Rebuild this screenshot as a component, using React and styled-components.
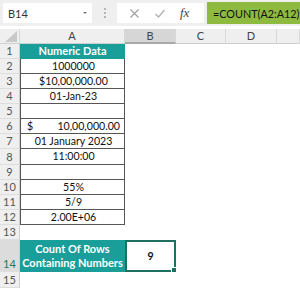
import React from "react";
import styled, { createGlobalStyle } from "styled-components";

const GlobalStyle = createGlobalStyle`
  html, body {
    margin: 0;
    padding: 0;
    background: #ffffff;
  }
  body {
    font-family: Lato, "Open Sans", "Liberation Sans", sans-serif;
    width: 300px;
    height: 288px;
    overflow: hidden;
  }
`;

const Page = styled.div`
  width: 300px;
  height: 288px;
  display: flex;
  flex-direction: column;
  overflow: hidden;
`;

const FormulaBar = styled.div`
  height: 27px;
  background: #efefef;
  display: flex;
  align-items: flex-start;
  padding-top: 3px;
  box-sizing: border-box;
`;

const NameBox = styled.div`
  margin-left: 3px;
  width: 89px;
  height: 20px;
  background: #ffffff;
  display: flex;
  align-items: center;
  justify-content: space-between;
  padding: 0 5px 0 5px;
  box-sizing: border-box;
  font-size: 11px;
  color: #333;
`;

const Caret = styled.span`
  width: 0;
  height: 0;
  border-left: 2px solid transparent;
  border-right: 2px solid transparent;
  border-top: 2px solid #777;
`;

const Dots = styled.div`
  width: 25px;
  height: 20px;
  display: flex;
  flex-direction: column;
  align-items: center;
  justify-content: center;
  gap: 2px;
  span {
    width: 2px;
    height: 2px;
    background: #b5b5b5;
  }
`;

const IconBox = styled.div`
  width: 87px;
  height: 20px;
  background: #ffffff;
  display: flex;
  align-items: center;
  padding-left: 12px;
  box-sizing: border-box;
  gap: 10px;
`;

const Fx = styled.span`
  font-family: "Liberation Serif", serif;
  font-style: italic;
  font-size: 13px;
  color: #444;
  margin-left: 4px;
`;

const Formula = styled.div`
  margin-left: 3px;
  flex: 1;
  height: 22px;
  margin-top: -1px;
  background: #8dba3f;
  display: flex;
  align-items: center;
  padding-left: 6px;
  font-size: 10.8px;
  color: #111;
  white-space: nowrap;
`;

const Sheet = styled.div`
  margin-top: 3px;
  display: grid;
  grid-template-columns: 20px 105px 51px 50px 51px 1fr;
  grid-template-rows: 15px repeat(13, 15.1px) 32px 16px;
  font-size: 10.6px;
`;

const Corner = styled.div`
  background: #efefef;
  border-right: 1px solid #d8d8d8;
  border-bottom: 1px solid #cfcfcf;
  box-sizing: border-box;
  position: relative;
  &::after {
    content: "";
    position: absolute;
    right: 2px;
    bottom: 1px;
    width: 0;
    height: 0;
    border-left: 12px solid transparent;
    border-bottom: 11px solid #c9c9c9;
  }
`;

const ColHead = styled.div`
  background: ${(p) => (p.$active ? "#d6d6d6" : "#efefef")};
  border-right: 1px solid #d8d8d8;
  border-bottom: ${(p) => (p.$active ? "2px solid #a9a9a9" : "1px solid #cfcfcf")};
  box-sizing: border-box;
  display: flex;
  align-items: center;
  justify-content: center;
  color: #444;
  font-size: 11px;
`;

const RowHead = styled.div`
  background: ${(p) => (p.$active ? "#dcdcdc" : "#efefef")};
  border-bottom: 1px solid #dedede;
  border-right: 1px solid #cfcfcf;
  box-sizing: border-box;
  display: flex;
  align-items: flex-end;
  justify-content: center;
  color: ${(p) => (p.$active ? "#217a66" : "#555")};
  font-size: 11px;
  line-height: 14px;
`;

const Cell = styled.div`
  box-sizing: border-box;
  display: flex;
  align-items: center;
  justify-content: ${(p) => (p.$split ? "space-between" : "center")};
  padding: 0 4px 0 6px;
  color: #111;
  white-space: nowrap;
  background: ${(p) => (p.$teal ? "#1a9e99" : "#ffffff")};
  border-left: ${(p) => (p.$boxed ? "1px solid #555" : "none")};
  border-right: ${(p) => (p.$boxed ? "1px solid #555" : "none")};
  border-bottom: ${(p) => (p.$boxed ? "1px solid #555" : "none")};
`;

const HeadCell = styled(Cell)`
  color: #ffffff;
  font-weight: 700;
  font-size: 11px;
  text-align: center;
  line-height: 14px;
  flex-direction: column;
  padding: 0;
`;

const Selected = styled.div`
  box-sizing: border-box;
  border: 2px solid #1f6e62;
  display: flex;
  align-items: center;
  justify-content: center;
  font-weight: 700;
  color: #111;
  position: relative;
  &::after {
    content: "";
    position: absolute;
    right: -3px;
    bottom: -3px;
    width: 4px;
    height: 4px;
    background: #1f6e62;
    border: 1px solid #fff;
  }
`;

const Blank = styled.div``;

const data = [
  null,
  "1000000",
  "$10,00,000.00",
  "01-Jan-23",
  "",
  "acct",
  "01 January 2023",
  "11:00:00",
  "",
  "55%",
  "5/9",
  "2.00E+06",
];

export default function App() {
  const rows = [];
  rows.push(
    <React.Fragment key="r1">
      <RowHead>1</RowHead>
      <HeadCell $teal>Numeric Data</HeadCell>
      <Blank />
      <Blank />
      <Blank />
      <Blank />
    </React.Fragment>
  );
  for (let i = 1; i < data.length; i++) {
    const v = data[i];
    rows.push(
      <React.Fragment key={"r" + (i + 1)}>
        <RowHead>{i + 1}</RowHead>
        {v === "acct" ? (
          <Cell $boxed $split>
            <span>$</span>
            <span>10,00,000.00</span>
          </Cell>
        ) : (
          <Cell $boxed>{v}</Cell>
        )}
        <Blank />
        <Blank />
        <Blank />
        <Blank />
      </React.Fragment>
    );
  }

  return (
    <Page>
      <GlobalStyle />
      <FormulaBar>
        <NameBox>
          <span>B14</span>
          <Caret />
        </NameBox>
        <Dots>
          <span />
          <span />
          <span />
        </Dots>
        <IconBox>
          <svg width="11" height="11" viewBox="0 0 11 11">
            <path d="M1.5 1.5 L9.5 9.5 M9.5 1.5 L1.5 9.5" stroke="#a0a0a0" strokeWidth="1.2" fill="none" />
          </svg>
          <svg width="12" height="11" viewBox="0 0 12 11" style={{ marginLeft: 4 }}>
            <path d="M1.5 6 L4.5 9 L10.5 2" stroke="#b0b0b0" strokeWidth="1.3" fill="none" />
          </svg>
          <Fx>fx</Fx>
        </IconBox>
        <Formula>=COUNT(A2:A12)</Formula>
      </FormulaBar>
      <Sheet>
        <Corner />
        <ColHead>A</ColHead>
        <ColHead $active>B</ColHead>
        <ColHead>C</ColHead>
        <ColHead>D</ColHead>
        <ColHead />
        {rows}
        <RowHead>13</RowHead>
        <Blank />
        <Blank />
        <Blank />
        <Blank />
        <Blank />
        <RowHead $active>14</RowHead>
        <HeadCell $teal>
          <span>Count Of Rows</span>
          <span>Containing Numbers</span>
        </HeadCell>
        <Selected>9</Selected>
        <Blank />
        <Blank />
        <Blank />
        <RowHead>15</RowHead>
        <Blank />
        <Blank />
        <Blank />
        <Blank />
        <Blank />
      </Sheet>
    </Page>
  );
}
